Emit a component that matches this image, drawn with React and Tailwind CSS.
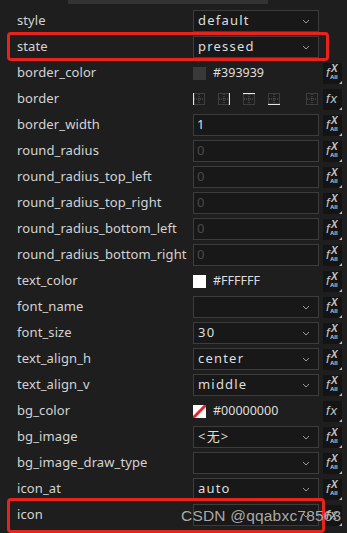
import React from 'react'

const font = { fontFamily: '"Noto Sans", "Open Sans", "Noto Sans CJK SC", sans-serif' }

function Fx({ all = true }) {
  return (
    <div className="relative w-[19px] h-[21px] bg-[#141414] font-['Liberation_Sans',sans-serif] text-[#c8c8c8]">
      {all ? (
        <>
          <span className="absolute left-[3px] top-[3px] italic text-[13px] leading-[13px]">f</span>
          <span className="absolute left-[8px] top-[1px] italic font-bold text-[10px] leading-[10px]">X</span>
          <span className="absolute left-[7px] top-[11px] font-bold text-[6px] leading-[6px]">All</span>
        </>
      ) : (
        <span className="absolute left-[3px] top-[3px] italic text-[13px] leading-[14px] tracking-[1px]">fx</span>
      )}
      <span className="absolute right-0 bottom-0 w-0 h-0 border-l-[3px] border-l-transparent border-b-[3px] border-b-[#bbbbbb]" />
    </div>
  )
}

function Chevron() {
  return (
    <svg width="8" height="5" viewBox="0 0 8 5" className="shrink-0">
      <path d="M1 1 L4 4 L7 1" stroke="#9a9a9a" strokeWidth="1" fill="none" />
    </svg>
  )
}

function Select({ value }) {
  return (
    <div className="w-[126px] h-[22px] bg-[#181818] border border-[#3d3d3d] flex items-center justify-between pl-[4px] pr-[8px]">
      <span className="text-[13px] tracking-[1.2px] text-[#dedede]">{value}</span>
      <Chevron />
    </div>
  )
}

function TextInput({ value, placeholder }) {
  return (
    <div className="w-[126px] h-[22px] bg-[#181818] border border-[#3d3d3d] flex items-center pl-[3px]">
      {value ? (
        <span className="text-[13px] text-[#dedede]">{value}</span>
      ) : (
        <span className="text-[13px] text-[#4a4a4a]">{placeholder}</span>
      )}
    </div>
  )
}

function Swatch({ color, text, slash }) {
  return (
    <div className="w-[126px] h-[22px] flex items-center gap-[7px]">
      <div className="relative w-[13px] h-[13px] overflow-hidden" style={{ background: color }}>
        {slash && (
          <svg width="13" height="13" viewBox="0 0 13 13" className="absolute inset-0">
            <path d="M0 13 L13 0" stroke="#e0262a" strokeWidth="3" />
          </svg>
        )}
      </div>
      <span className="text-[12.5px] text-[#dedede]">{text}</span>
    </div>
  )
}

function BorderIcon({ side }) {
  const s = '#e6e6e6'
  const g = '#5c5c5c'
  return (
    <svg width="12" height="12" viewBox="0 0 12 12">
      <rect x="0.5" y="0.5" width="11" height="11" fill="none" stroke={g} strokeWidth="1" strokeDasharray="1 1" />
      <path d="M6 1 V11 M1 6 H11" stroke={g} strokeWidth="1" strokeDasharray="1 1" />
      {side === 'left' && <path d="M0.5 0 V12" stroke={s} strokeWidth="1.2" />}
      {side === 'right' && <path d="M11.5 0 V12" stroke={s} strokeWidth="1.2" />}
      {side === 'top' && <path d="M0 0.5 H12" stroke={s} strokeWidth="1.2" />}
      {side === 'bottom' && <path d="M0 11.5 H12" stroke={s} strokeWidth="1.2" />}
    </svg>
  )
}

function BorderSides() {
  return (
    <div className="w-[126px] h-[22px] flex items-center">
      <div className="flex items-center gap-[13px]">
        <BorderIcon side="left" />
        <BorderIcon side="right" />
        <BorderIcon side="top" />
        <BorderIcon side="bottom" />
      </div>
      <div className="ml-auto mr-[1px]">
        <BorderIcon side="none" />
      </div>
    </div>
  )
}

const rows = [
  { label: 'style', control: <Select value="default" />, fx: null },
  { label: 'state', control: <Select value="pressed" />, fx: null, mark: true },
  { label: 'border_color', control: <Swatch color="#393939" text="#393939" />, fx: 'all' },
  { label: 'border', control: <BorderSides />, fx: 'fx' },
  { label: 'border_width', control: <TextInput value="1" />, fx: 'all' },
  { label: 'round_radius', control: <TextInput placeholder="0" />, fx: 'all' },
  { label: 'round_radius_top_left', control: <TextInput placeholder="0" />, fx: 'all' },
  { label: 'round_radius_top_right', control: <TextInput placeholder="0" />, fx: 'all' },
  { label: 'round_radius_bottom_left', control: <TextInput placeholder="0" />, fx: 'all' },
  { label: 'round_radius_bottom_right', control: <TextInput placeholder="0" />, fx: 'all' },
  { label: 'text_color', control: <Swatch color="#ffffff" text="#FFFFFF" />, fx: 'all' },
  { label: 'font_name', control: <Select value="" />, fx: 'all' },
  { label: 'font_size', control: <Select value="30" />, fx: 'all' },
  { label: 'text_align_h', control: <Select value="center" />, fx: 'all' },
  { label: 'text_align_v', control: <Select value="middle" />, fx: 'all' },
  { label: 'bg_color', control: <Swatch color="#ffffff" text="#00000000" slash />, fx: 'fx' },
  { label: 'bg_image', control: <Select value="<无>" />, fx: 'all' },
  { label: 'bg_image_draw_type', control: <Select value="" />, fx: 'all' },
  { label: 'icon_at', control: <Select value="auto" />, fx: 'all' },
  { label: 'icon', control: <Select value="" />, fx: 'fx', mark2: true },
]

export default function App() {
  return (
    <div className="w-[347px] h-[533px] bg-[#1e1e1e] overflow-hidden" style={font}>
      <div className="h-[4px] flex">
        <div className="ml-[68px] w-[200px] h-[4px] bg-[#333333]" />
      </div>
      <div className="pt-[4px]">
        {rows.map((r) => (
          <div key={r.label} className="relative h-[26px] flex items-center">
            <div className="w-[193px] pl-[17px] text-[13px] text-[#d4d4d4] tracking-[0.1px] whitespace-nowrap">{r.label}</div>
            {r.control}
            <div className="ml-[4px]">
              {r.fx && <Fx all={r.fx === 'all'} />}
            </div>
            {r.mark && (
              <div className="absolute left-[7px] w-[322px] top-[-2px] h-[29px] border-[3px] border-[#e8231b] rounded-[4px]" />
            )}
            {r.mark2 && (
              <>
                <div className="absolute left-[7px] w-[318px] top-[-4px] h-[35px] border-[3px] border-[#e8231b] rounded-[4px]" />
                <div className="absolute left-[181px] top-[2px] text-[15.5px] text-[#bdbdbd]/90 font-['Liberation_Sans',sans-serif] tracking-[0.2px] whitespace-nowrap">
                  CSDN @qqabxc78563
                </div>
              </>
            )}
          </div>
        ))}
      </div>
    </div>
  )
}
